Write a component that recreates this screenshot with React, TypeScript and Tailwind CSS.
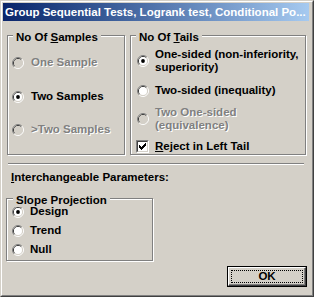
import React from "react";

function Radio({ checked, disabled }: { checked?: boolean; disabled?: boolean }) {
  return (
    <svg width="12" height="12" viewBox="0 0 12 12" className="shrink-0">
      <path d="M2.11 9.89A5.5 5.5 0 0 1 9.89 2.11" fill="none" stroke="#808080" />
      <path d="M9.89 2.11A5.5 5.5 0 0 1 2.11 9.89" fill="none" stroke="#ffffff" />
      <path d="M2.82 9.18A4.5 4.5 0 0 1 9.18 2.82" fill="none" stroke="#404040" />
      <path d="M9.18 2.82A4.5 4.5 0 0 1 2.82 9.18" fill="none" stroke="#d4d0c8" />
      <circle cx="6" cy="6" r="4" fill={disabled ? "#d4d0c8" : "#ffffff"} />
      {checked && <circle cx="6" cy="6" r="1.9" fill="#000000" />}
    </svg>
  );
}

function Checkbox() {
  const cols: [number, number][] = [
    [0, 2],
    [1, 3],
    [2, 4],
    [3, 3],
    [4, 2],
    [5, 1],
    [6, 0],
  ];
  return (
    <div className="w-[13px] h-[13px] shrink-0 border border-t-[#808080] border-l-[#808080] border-r-white border-b-white">
      <div className="w-full h-full border border-t-[#404040] border-l-[#404040] border-r-[#d4d0c8] border-b-[#d4d0c8] bg-white">
        <svg width="9" height="9" viewBox="0 0 9 9" shapeRendering="crispEdges">
          {cols.map(([x, y]) => (
            <rect key={x} x={x + 1} y={y + 1} width="1" height="3" fill="#000" />
          ))}
        </svg>
      </div>
    </div>
  );
}

function Label({ children, disabled }: { children: React.ReactNode; disabled?: boolean }) {
  return (
    <div
      className={
        disabled
          ? "text-[#808080] [text-shadow:1px_1px_0_#ffffff] leading-[13px]"
          : "text-black leading-[13px]"
      }
    >
      {children}
    </div>
  );
}

export default function App() {
  return (
    <div className="w-[314px] h-[297px] bg-[#d4d0c8] border border-t-[#d4d0c8] border-l-[#d4d0c8] border-r-[#404040] border-b-[#404040] font-['Liberation_Sans',Arial,sans-serif] font-bold text-[11.5px] leading-[13px] text-black">
      <div className="h-full border border-t-white border-l-white border-r-[#808080] border-b-[#808080] pt-[1px] pl-[1px] pr-[3px] flex flex-col">
        {/* Title bar */}
        <div className="h-[18px] shrink-0 bg-linear-to-r from-[#0a246a] to-[#a6caf0] flex items-center pl-[2px] text-white whitespace-nowrap overflow-hidden">
          Group Sequential Tests, Logrank test, Conditional Po...
        </div>

        {/* Body */}
        <div className="flex flex-col">
          <div className="flex mt-[14px] pl-[4px] gap-[5px]">
            {/* No Of Samples */}
            <div className="relative w-[118px] h-[120px] border border-[#808080] shadow-[inset_1px_1px_0_#fff,1px_1px_0_#fff] flex flex-col pl-[4px]">
              <div className="absolute top-[-5px] left-[5px] px-[3px] bg-[#d4d0c8] leading-[13px]">
                No Of <span className="underline">S</span>amples
              </div>
              <div className="flex items-center gap-[7px] mt-[20px]">
                <Radio disabled />
                <Label disabled>One Sample</Label>
              </div>
              <div className="flex items-center gap-[7px] mt-[21px]">
                <Radio checked />
                <Label>Two Samples</Label>
              </div>
              <div className="flex items-center gap-[7px] mt-[20px]">
                <Radio disabled />
                <Label disabled>&gt;Two Samples</Label>
              </div>
            </div>

            {/* No Of Tails */}
            <div className="relative w-[176px] h-[120px] border border-[#808080] shadow-[inset_1px_1px_0_#fff,1px_1px_0_#fff] flex flex-col pl-[6px]">
              <div className="absolute top-[-5px] left-[5px] px-[3px] bg-[#d4d0c8] leading-[13px]">
                No Of <span className="underline">T</span>ails
              </div>
              <div className="flex items-center gap-[6px] mt-[12px]">
                <Radio checked />
                <Label>
                  One-sided (non-inferiority,
                  <br />
                  superiority)
                </Label>
              </div>
              <div className="flex items-center gap-[6px] mt-[10px]">
                <Radio />
                <Label>Two-sided (inequality)</Label>
              </div>
              <div className="flex items-center gap-[6px] mt-[9px]">
                <Radio disabled />
                <Label disabled>
                  Two One-sided
                  <br />
                  (equivalence)
                </Label>
              </div>
              <div className="flex items-center gap-[6px] mt-[8px] ml-[-1px]">
                <Checkbox />
                <Label>
                  <span className="underline">R</span>eject in Left Tail
                </Label>
              </div>
            </div>
          </div>

          {/* Separator */}
          <div className="mt-[8px] ml-[5px] w-[296px] h-[2px] border-t border-t-[#808080] border-b border-b-white" />

          <div className="mt-[6px] ml-[8px] leading-[13px]">
            <span className="underline">I</span>nterchangeable Parameters:
          </div>

          {/* Slope Projection */}
          <div className="relative mt-[14px] ml-[3px] w-[147px] h-[63px] border border-[#808080] shadow-[inset_1px_1px_0_#fff,1px_1px_0_#fff] flex flex-col pl-[5px]">
            <div className="absolute top-[-5px] left-[6px] px-[3px] bg-[#d4d0c8] leading-[13px]">
              Slope Projection
            </div>
            <div className="flex items-center gap-[6px] mt-[6px]">
              <Radio checked />
              <Label>Design</Label>
            </div>
            <div className="flex items-center gap-[6px] mt-[6px]">
              <Radio />
              <Label>Trend</Label>
            </div>
            <div className="flex items-center gap-[6px] mt-[6px]">
              <Radio />
              <Label>Null</Label>
            </div>
          </div>

          {/* OK button */}
          <div className="mt-[5px] flex justify-end pr-[2px]">
            <div className="w-[80px] h-[21px] border border-black">
              <div className="w-full h-full border border-t-white border-l-white border-r-[#404040] border-b-[#404040] shadow-[inset_-1px_-1px_0_#808080] p-[2px]">
                <div className="w-full h-full border border-dotted border-black flex items-center justify-center leading-[13px]">
                  OK
                </div>
              </div>
            </div>
          </div>
        </div>
      </div>
    </div>
  );
}
